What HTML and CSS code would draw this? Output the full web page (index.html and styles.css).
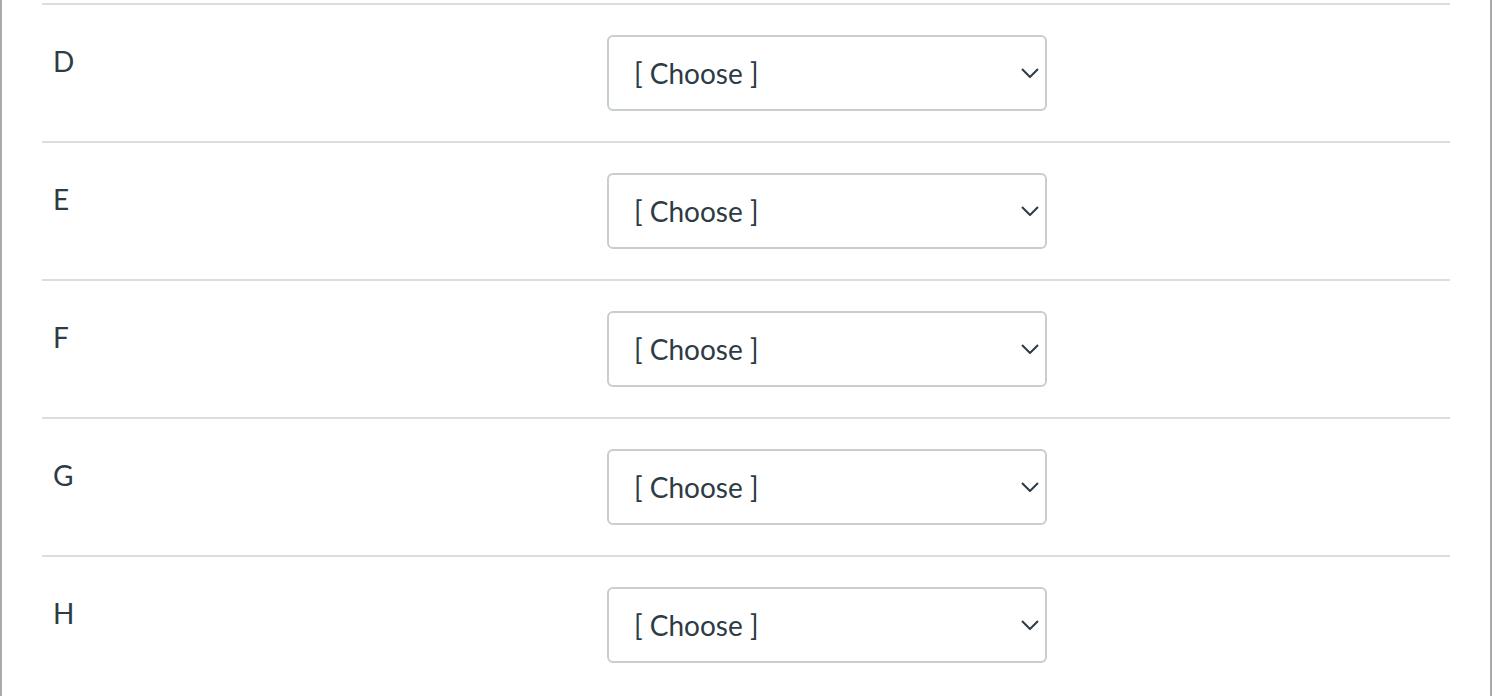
FILE: index.html
```html
<!DOCTYPE html>
<html lang="en">
<head>
<meta charset="utf-8">
<title>Matching</title>
<link rel="stylesheet" href="styles.css">
</head>
<body>
<div class="frame">
  <div class="row">
    <div class="label">D</div>
    <div class="select-wrap">
      <select class="choice"><option>[ Choose ]</option></select>
      <svg class="chev" width="18" height="10" viewBox="0 0 18 10"><path d="M1 1 L9 9 L17 1" fill="none" stroke="#2d3b45" stroke-width="2"/></svg>
    </div>
  </div>
  <div class="row">
    <div class="label">E</div>
    <div class="select-wrap">
      <select class="choice"><option>[ Choose ]</option></select>
      <svg class="chev" width="18" height="10" viewBox="0 0 18 10"><path d="M1 1 L9 9 L17 1" fill="none" stroke="#2d3b45" stroke-width="2"/></svg>
    </div>
  </div>
  <div class="row">
    <div class="label">F</div>
    <div class="select-wrap">
      <select class="choice"><option>[ Choose ]</option></select>
      <svg class="chev" width="18" height="10" viewBox="0 0 18 10"><path d="M1 1 L9 9 L17 1" fill="none" stroke="#2d3b45" stroke-width="2"/></svg>
    </div>
  </div>
  <div class="row">
    <div class="label">G</div>
    <div class="select-wrap">
      <select class="choice"><option>[ Choose ]</option></select>
      <svg class="chev" width="18" height="10" viewBox="0 0 18 10"><path d="M1 1 L9 9 L17 1" fill="none" stroke="#2d3b45" stroke-width="2"/></svg>
    </div>
  </div>
  <div class="row">
    <div class="label">H</div>
    <div class="select-wrap">
      <select class="choice"><option>[ Choose ]</option></select>
      <svg class="chev" width="18" height="10" viewBox="0 0 18 10"><path d="M1 1 L9 9 L17 1" fill="none" stroke="#2d3b45" stroke-width="2"/></svg>
    </div>
  </div>
</div>
</body>
</html>
```
FILE: styles.css
```css
html, body {
  margin: 0;
  padding: 0;
  background: #fff;
  overflow: hidden;
}
body {
  font-family: Lato, "Liberation Sans", sans-serif;
  color: #2d3b45;
}
.frame {
  width: 1408px;
  height: 693px;
  padding: 3px 40px 0 40px;
  border-left: 2px solid #aaaaaa;
  border-right: 2px solid #aaaaaa;
}
.row {
  display: flex;
  align-items: flex-start;
  height: 136px;
  border-top: 2px solid #dddddd;
}
.label {
  width: 554px;
  padding-left: 11px;
  margin-top: 39px;
  font-size: 28px;
  line-height: 34px;
}
.select-wrap {
  position: relative;
  margin-top: 30px;
  width: 440px;
  height: 76px;
}
.choice {
  -webkit-appearance: none;
  appearance: none;
  display: block;
  width: 440px;
  height: 76px;
  box-sizing: border-box;
  border: 2px solid #c7cdd1;
  border-radius: 6px;
  background: #fff;
  padding: 0 0 0 25px;
  font-family: Lato, "Liberation Sans", sans-serif;
  font-size: 28px;
  color: #2d3b45;
  outline: none;
}
.chev {
  position: absolute;
  right: 8px;
  top: 33px;
  pointer-events: none;
}
```
